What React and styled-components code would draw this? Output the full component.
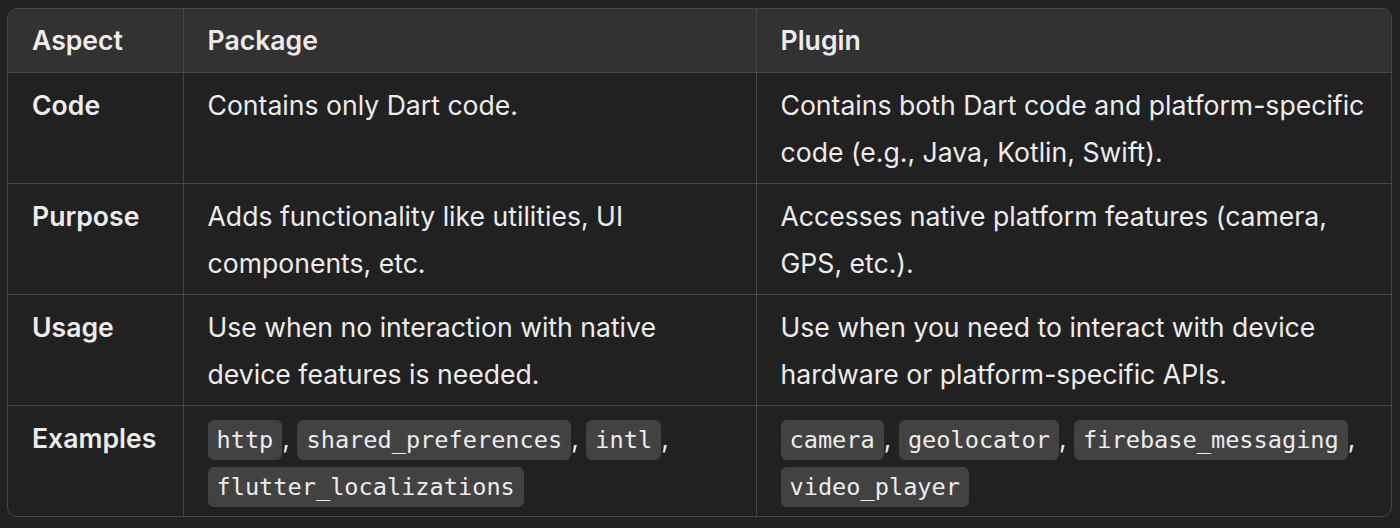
import React from 'react';
import styled, { createGlobalStyle } from 'styled-components';

const GlobalStyle = createGlobalStyle`
  html, body {
    margin: 0;
    background: #212121;
  }
  body {
    padding: 8px 8px 0 7px;
    font-family: Inter, "Noto Sans", sans-serif;
    color: #ececec;
  }
`;

const TableFrame = styled.div`
  border: 1px solid #474747;
  border-radius: 10px;
  overflow: hidden;
  width: 1385px;
  box-sizing: border-box;
`;

const Table = styled.table`
  width: 100%;
  border-collapse: collapse;
  table-layout: fixed;
  font-size: 26.6px;
  line-height: 47px;
`;

const HeadRow = styled.tr`
  background: #323232;
`;

const Th = styled.th`
  text-align: left;
  font-weight: 600;
  height: 63px;
  padding: 0 24px;
  border-bottom: 1px solid #474747;
  border-left: 1px solid #474747;
  box-sizing: border-box;
  &:first-child {
    border-left: none;
  }
`;

const Td = styled.td`
  vertical-align: top;
  padding: 9px 24px 7px;
  border-left: 1px solid #474747;
  border-bottom: 1px solid #474747;
  font-weight: ${(p) => (p.label ? 600 : 400)};
  &:first-child {
    border-left: none;
  }
  tr:last-child > & {
    border-bottom: none;
  }
`;

const Code = styled.code`
  font-family: "DejaVu Sans Mono", "Liberation Mono", monospace;
  font-size: 23.6px;
  line-height: 1;
  background: #424242;
  border-radius: 6px;
  padding: 6px 9px;
`;

const rows = [
  {
    aspect: 'Code',
    pkg: 'Contains only Dart code.',
    plugin: 'Contains both Dart code and platform-specific code (e.g., Java, Kotlin, Swift).',
  },
  {
    aspect: 'Purpose',
    pkg: 'Adds functionality like utilities, UI components, etc.',
    plugin: 'Accesses native platform features (camera, GPS, etc.).',
  },
  {
    aspect: 'Usage',
    pkg: 'Use when no interaction with native device features is needed.',
    plugin: 'Use when you need to interact with device hardware or platform-specific APIs.',
  },
];

const CodeList = ({ items }) =>
  items.map((name, i) => (
    <React.Fragment key={name}>
      <Code>{name}</Code>
      {i < items.length - 1 ? ', ' : ''}
    </React.Fragment>
  ));

export default function App() {
  return (
    <>
      <GlobalStyle />
      <TableFrame>
        <Table>
          <colgroup>
            <col style={{ width: 175 }} />
            <col style={{ width: 573 }} />
            <col />
          </colgroup>
          <thead>
            <HeadRow>
              <Th>Aspect</Th>
              <Th>Package</Th>
              <Th>Plugin</Th>
            </HeadRow>
          </thead>
          <tbody>
            {rows.map((r) => (
              <tr key={r.aspect}>
                <Td label>{r.aspect}</Td>
                <Td>{r.pkg}</Td>
                <Td>{r.plugin}</Td>
              </tr>
            ))}
            <tr>
              <Td label>Examples</Td>
              <Td>
                <CodeList items={['http', 'shared_preferences', 'intl', 'flutter_localizations']} />
              </Td>
              <Td>
                <CodeList items={['camera', 'geolocator', 'firebase_messaging', 'video_player']} />
              </Td>
            </tr>
          </tbody>
        </Table>
      </TableFrame>
    </>
  );
}
